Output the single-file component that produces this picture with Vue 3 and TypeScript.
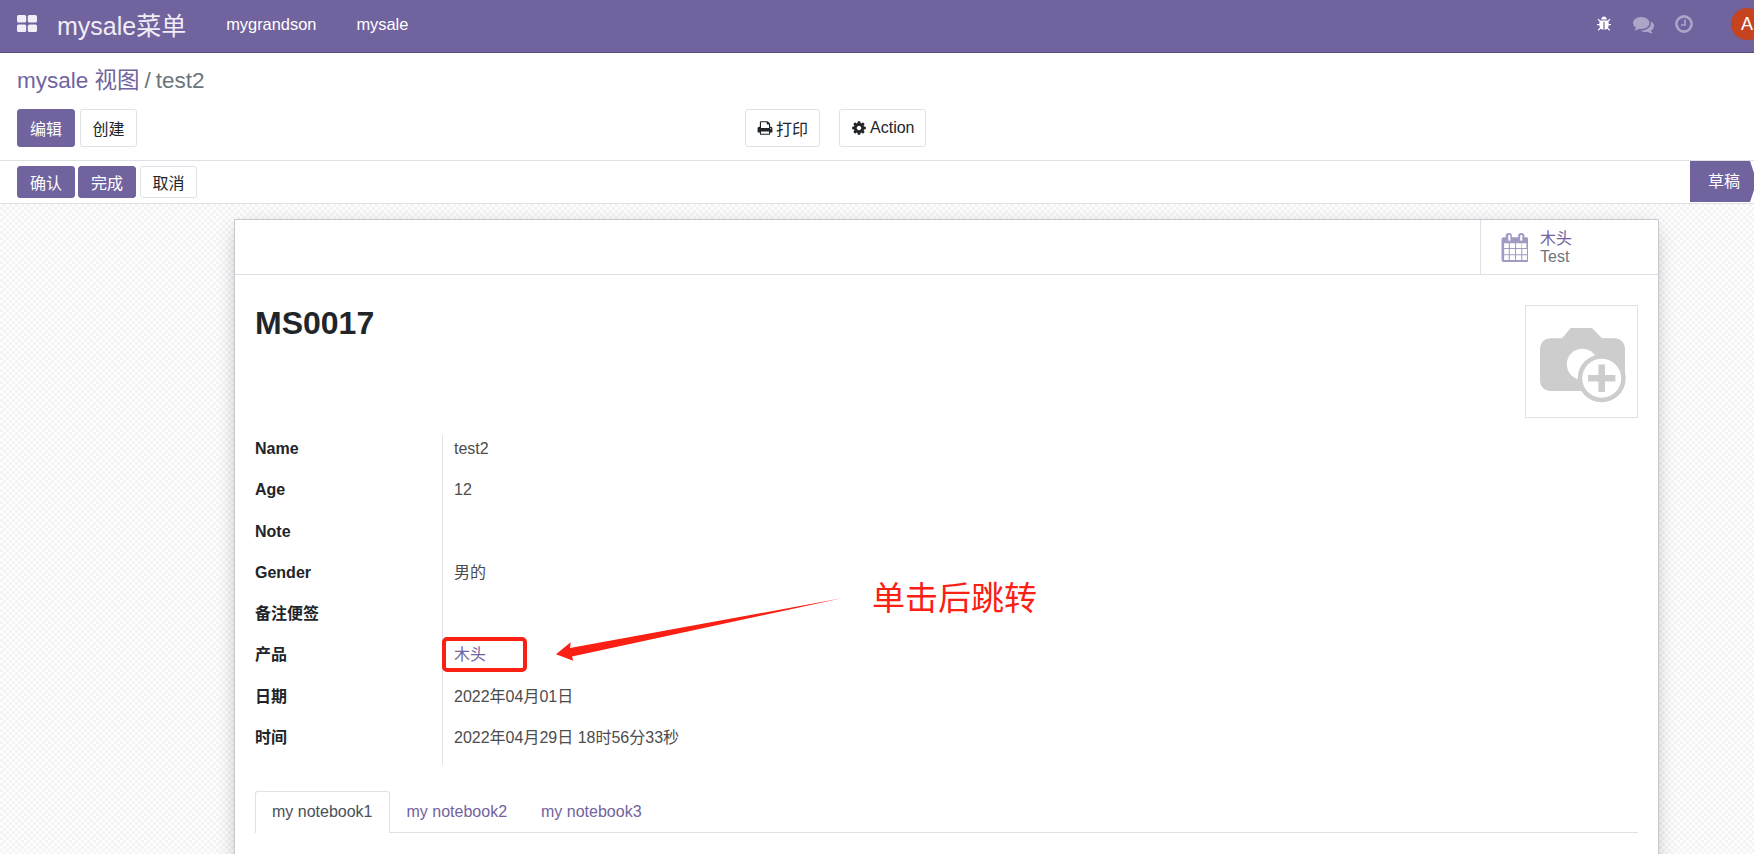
<template>
  <div class="page">
    <header class="navbar">
      <svg class="apps-icon" viewBox="0 0 20 17" aria-hidden="true">
        <rect x="0" y="0" width="9.2" height="7.6" rx="1.6" />
        <rect x="10.8" y="0" width="9.2" height="7.6" rx="1.6" />
        <rect x="0" y="9.4" width="9.2" height="7.6" rx="1.6" />
        <rect x="10.8" y="9.4" width="9.2" height="7.6" rx="1.6" />
      </svg>
      <span class="brand">mysale菜单</span>
      <a v-for="item in navItems" :key="item" class="nav-link">{{ item }}</a>
      <div class="systray">
        <svg class="tray-icon bug" viewBox="0 0 1792 1792" aria-hidden="true"><path :d="icons.bug" /></svg>
        <svg class="tray-icon muted" viewBox="0 0 1792 1792" aria-hidden="true"><path :d="icons.comments" /></svg>
        <svg class="tray-icon muted clock" viewBox="0 0 18 18" aria-hidden="true">
          <circle cx="9" cy="9" r="7.6" fill="none" stroke="currentColor" stroke-width="2.6" />
          <path d="M10 4.6V10H6" fill="none" stroke="currentColor" stroke-width="1.6" />
        </svg>
        <span class="avatar">A</span>
      </div>
    </header>

    <section class="control-panel">
      <div class="breadcrumb">
        <a class="crumb-link">mysale 视图</a><span class="crumb-sep">/</span><span>test2</span>
      </div>
      <div class="cp-buttons">
        <div class="cp-left">
          <button class="btn primary">编辑</button>
          <button class="btn">创建</button>
        </div>
        <div class="cp-sidebar">
          <button class="btn with-icon">
            <svg class="btn-icon" viewBox="0 0 1792 1792" aria-hidden="true"><path :d="icons.print" /></svg>打印
          </button>
          <button class="btn with-icon">
            <svg class="btn-icon" viewBox="0 0 1792 1792" aria-hidden="true"><path :d="icons.cog" /></svg>Action
          </button>
        </div>
      </div>
    </section>

    <section class="statusbar">
      <div class="status-actions">
        <button class="btn small primary">确认</button>
        <button class="btn small primary">完成</button>
        <button class="btn small gap">取消</button>
      </div>
      <div class="status-pill">草稿</div>
    </section>

    <main class="form-bg">
      <div class="sheet">
        <div class="button-box">
          <div class="stat-button">
            <svg class="stat-icon" viewBox="0 0 1664 1792" aria-hidden="true"><path :d="icons.calendar" /></svg>
            <div class="stat-text">
              <span class="stat-value">木头</span>
              <span class="stat-label">Test</span>
            </div>
          </div>
        </div>

        <div class="sheet-body">
          <div class="sheet-head">
            <h1 class="record-title">MS0017</h1>
            <div class="image-box">
              <svg viewBox="0 0 111 111" class="camera" aria-hidden="true">
                <path class="cam-body" d="M24 32.300H36L44.700 22H66L76 32.300H89A10 10 0 0 1 99 42.300V75A10 10 0 0 1 89 85H24A10 10 0 0 1 14 75V42.300A10 10 0 0 1 24 32.300Z" />
                <circle class="cam-lens" cx="56.300" cy="58.300" r="15.500" />
                <circle class="cam-ring" cx="75.700" cy="72.300" r="24" />
                <circle class="cam-plus-bg" cx="75.700" cy="72.300" r="19.500" />
                <path class="cam-plus" d="M62 72.300H89.400M75.700 58.600V86" />
              </svg>
            </div>
          </div>

          <div class="fields">
            <template v-for="row in rows" :key="row.label">
              <div class="field-label">{{ row.label }}</div>
              <div class="field-value" :class="{ link: row.link }">{{ row.value }}</div>
            </template>
          </div>

          <div class="tabs">
            <a v-for="(tab, i) in tabs" :key="tab" class="tab" :class="{ active: i === 0 }">{{ tab }}</a>
          </div>
        </div>
      </div>
    </main>

    <!-- red markup drawn on top of the screenshot -->
    <div class="mark-box"></div>
    <svg class="mark-arrow" width="300" height="80" viewBox="0 0 300 80" aria-hidden="true">
      <polygon points="291.7,8.3 20,58 20.7,52.3 6,64.3 23.3,70.7 22,66.5" fill="#fa2014" />
    </svg>
    <div class="mark-text">单击后跳转</div>
  </div>
</template>

<script setup lang="ts">
interface FormRow {
  label: string;
  value: string;
  link?: boolean;
}

const navItems: string[] = ['mygrandson', 'mysale'];
const tabs: string[] = ['my notebook1', 'my notebook2', 'my notebook3'];

const rows: FormRow[] = [
  { label: 'Name', value: 'test2' },
  { label: 'Age', value: '12' },
  { label: 'Note', value: '' },
  { label: 'Gender', value: '男的' },
  { label: '备注便签', value: '' },
  { label: '产品', value: '木头', link: true },
  { label: '日期', value: '2022年04月01日' },
  { label: '时间', value: '2022年04月29日 18时56分33秒' },
];

const icons = {
  bug: 'M1696 960q0 26-19 45t-45 19h-224q0 171-67 290l208 209q19 19 19 45t-19 45q-18 19-45 19t-45-19l-198-197q-5 5-15 13t-42 28.500-65 36.500-82 29-97 13v-896h-128v896q-51 0-101.500-13.500t-87-33-66-39-43.500-32.500l-15-14-183 207q-20 21-48 21-24 0-43-16-19-18-20.500-44.500t15.500-46.500l202-227q-58-114-58-274h-224q-26 0-45-19t-19-45 19-45 45-19h224v-294l-173-173q-19-19-19-45t19-45 45-19 45 19l173 173h844l173-173q19-19 45-19t45 19 19 45-19 45l-173 173v294h224q26 0 45 19t19 45zm-480-576h-640q0-133 93.500-226.500t226.500-93.500 226.500 93.500 93.500 226.500z',
  comments: 'M1408 768q0 139-94 257t-256.500 186.500-353.500 68.500q-86 0-176-16-124 88-278 128-36 9-86 16h-3q-11 0-20.500-8t-11.500-21q-1-3-1-6.500t.5-6.500 2-6l2.500-5 3.500-5.500 4-5 4.500-5 4-4.500q5-6 23-25t26-29.500 22.500-29 25-38.500 20.500-44q-124-72-195-177t-71-224q0-139 94-257t256.500-186.500 353.500-68.500 353.500 68.500 256.500 186.500 94 257zm384 256q0 120-71 224.500t-195 176.500q10 24 20.500 44t25 38.500 22.500 29 26 29.500 23 25q1 1 4 4.500t4.500 5 4 5 3.500 5.500l2.500 5t2 6 .5 6.500-1 6.500q-3 14-13 22t-22 7q-50-7-86-16-154-40-278-128-90 16-176 16-271 0-472-132 58 4 88 4 161 0 309-45t264-129q125-92 192-212t67-254q0-77-23-152 129 71 204 178t75 230z',
  print: 'M448 1536h896v-256h-896v256zm0-640h896v-384h-160q-40 0-68-28t-28-68v-160h-640v640zm1152 64q0-26-19-45t-45-19-45 19-19 45 19 45 45 19 45-19 19-45zm128 0v416q0 13-9.500 22.500t-22.500 9.500h-224v160q0 40-28 68t-68 28h-960q-40 0-68-28t-28-68v-160h-224q-13 0-22.500-9.500t-9.500-22.500v-416q0-79 56.500-135.500t135.500-56.500h64v-544q0-40 28-68t68-28h672q40 0 88 20t76 48l152 152q28 28 48 76t20 88v256h64q79 0 135.500 56.500t56.500 135.500z',
  cog: 'M1152 896q0-106-75-181t-181-75-181 75-75 181 75 181 181 75 181-75 75-181zm512-109v222q0 12-8 23t-20 13l-185 28q-19 54-39 91 35 50 107 138 10 12 10 25t-9 23q-27 37-99 108t-94 71q-12 0-26-9l-138-108q-44 23-91 38-16 136-29 186-7 28-36 28h-222q-14 0-24.500-8.500t-11.500-21.500l-28-184q-49-16-90-37l-141 107q-10 9-25 9-14 0-25-11-126-114-165-168-7-10-7-23 0-12 8-23 15-21 51-66.500t54-70.500q-27-50-41-99l-183-27q-13-2-21-12.500t-8-23.500v-222q0-12 8-23t19-13l186-28q14-46 39-92-40-57-107-138-10-12-10-24 0-10 9-23 26-36 98.500-107.500t94.500-71.500q13 0 26 10l138 107q44-23 91-38 16-136 29-186 7-28 36-28h222q14 0 24.500 8.500t11.500 21.500l28 184q49 16 90 37l142-107q9-9 24-9 13 0 25 10 129 119 165 170 7 8 7 22 0 12-8 23-15 21-51 66.500t-54 70.500q26 50 41 98l183 28q13 2 21 12.500t8 23.500z',
  calendar: 'M192 1664h288v-288h-288v288zm352 0h320v-288h-320v288zm-352-352h288v-320h-288v320zm352 0h320v-320h-320v320zm-352-384h288v-288h-288v288zm736 736h320v-288h-320v288zm-384-736h320v-288h-320v288zm768 736h288v-288h-288v288zm-384-352h320v-320h-320v320zm-352-864v-288q0-13-9.500-22.500t-22.500-9.500h-64q-13 0-22.500 9.500t-9.500 22.500v288q0 13 9.500 22.500t22.500 9.500h64q13 0 22.500-9.500t9.500-22.500zm736 864h288v-320h-288v320zm-384-384h320v-288h-320v288zm352 0h288v-288h-288v288zm32-480v-288q0-13-9.500-22.500t-22.500-9.500h-64q-13 0-22.500 9.500t-9.500 22.500v288q0 13 9.500 22.500t22.500 9.500h64q13 0 22.500-9.500t9.500-22.500zm384-64v1280q0 52-38 90t-90 38h-1408q-52 0-90-38t-38-90v-1280q0-52 38-90t90-38h128v-96q0-66 47-113t113-47h64q66 0 113 47t47 113v96h384v-96q0-66 47-113t113-47h64q66 0 113 47t47 113v96h128q52 0 90 38t38 90z',
};
</script>

<style>
html,
body {
  margin: 0;
  overflow: hidden;
}
</style>

<style scoped>
.page {
  position: relative;
  width: 1754px;
  height: 854px;
  overflow: hidden;
  display: flex;
  flex-direction: column;
  background: #fff;
  color: #4c4c4c;
  font-family: "Liberation Sans", "Noto Sans CJK SC", sans-serif;
  font-size: 16px;
}

.navbar {
  flex: none;
  box-sizing: border-box;
  height: 53px;
  display: flex;
  align-items: center;
  padding: 0 0 4px 17px;
  background: #71639e;
  border-bottom: 1px solid #5b4f7f;
  color: #fff;
}

.apps-icon {
  width: 20px;
  height: 17px;
  margin-right: 20px;
  margin-top: -2px;
  fill: #f1eef7;
}

.brand {
  font-size: 25px;
  margin-right: 40px;
  color: #f0edf6;
}

.nav-link {
  font-size: 16.4px;
  margin-right: 40px;
}

.systray {
  margin-left: auto;
  display: flex;
  align-items: center;
}

.tray-icon {
  width: 21px;
  height: 21px;
  fill: currentColor;
}

.tray-icon.bug {
  width: 16px;
  height: 16px;
  margin-right: 21px;
  color: #fff;
}

.tray-icon.muted {
  color: #aea5c8;
  margin-right: 21px;
}

.tray-icon.clock {
  width: 18px;
  height: 18px;
  margin-right: 0;
}

.avatar {
  width: 32px;
  height: 32px;
  margin-left: 38px;
  margin-right: -9px;
  flex: none;
  border-radius: 50%;
  background: #c5431f;
  color: #fff;
  font-size: 18px;
  line-height: 32px;
  text-align: center;
}

.control-panel {
  flex: none;
  height: 108px;
  box-sizing: border-box;
  padding: 14px 17px 0;
  border-bottom: 1px solid #dee2e6;
}

.breadcrumb {
  height: 28px;
  line-height: 28px;
  font-size: 22.5px;
  color: #6c757d;
}

.crumb-link {
  color: #71639e;
}

.crumb-sep {
  margin: 0 5px;
}

.cp-buttons {
  display: flex;
  margin-top: 14px;
}

.cp-left {
  width: 728px;
  display: flex;
  gap: 5px;
}

.cp-sidebar {
  display: flex;
  gap: 19px;
}

.btn {
  box-sizing: border-box;
  height: 38px;
  padding: 0 11.5px;
  display: inline-flex;
  align-items: center;
  border: 1px solid #dee2e6;
  border-radius: 3px;
  background: #fff;
  color: #212529;
  font: inherit;
}

.btn.primary {
  padding: 0 12px;
  background: #71639e;
  border-color: #71639e;
  color: #fff;
}

.btn.with-icon {
  padding: 0 11px;
}

.btn.small {
  height: 32px;
}

.btn.gap {
  margin-left: 1px;
}

.btn-icon {
  width: 16px;
  height: 16px;
  margin-right: 3px;
  fill: #212529;
}

.statusbar {
  flex: none;
  height: 43px;
  box-sizing: border-box;
  display: flex;
  justify-content: space-between;
  padding-left: 17px;
  border-bottom: 1px solid #dee2e6;
}

.status-actions {
  display: flex;
  gap: 3px;
  padding-top: 5px;
}

.status-pill {
  width: 64px;
  height: 41px;
  line-height: 41px;
  padding-left: 18px;
  box-sizing: border-box;
  background: #71639e;
  color: #fff;
  clip-path: polygon(0 0, 60px 0, 64px 12px, 64px 29px, 60px 41px, 0 41px);
}

.form-bg {
  flex: 1;
  min-height: 0;
  padding-top: 15px;
  background-color: #fdfdfd;
  background-image: conic-gradient(#f4f4f4 25%, transparent 0 50%, #f4f4f4 0 75%, transparent 0);
  background-size: 6px 6px;
}

.sheet {
  box-sizing: border-box;
  width: 1425px;
  height: 700px;
  margin-left: 234px;
  background: #fff;
  border: 1px solid #c8c8d3;
  box-shadow: 0 5px 20px -6px rgba(0, 0, 0, 0.35);
}

.button-box {
  height: 54px;
  display: flex;
  justify-content: flex-end;
  border-bottom: 1px solid #dee2e6;
}

.stat-button {
  width: 178px;
  box-sizing: border-box;
  display: flex;
  align-items: center;
  padding-left: 20px;
  border-left: 1px solid #dee2e6;
}

.stat-icon {
  width: 27px;
  height: 29px;
  fill: #a29ac2;
  margin-right: 12px;
}

.stat-text {
  display: flex;
  flex-direction: column;
  line-height: 18px;
  padding-top: 2px;
}

.stat-value {
  color: #71639e;
}

.stat-label {
  color: #6c757d;
}

.sheet-body {
  padding: 30px 20px 0 20px;
}

.sheet-head {
  display: flex;
  justify-content: space-between;
  align-items: flex-start;
  height: 113px;
}

.record-title {
  margin: 0;
  font-size: 32px;
  line-height: 36px;
  color: #212529;
}

.image-box {
  width: 113px;
  height: 113px;
  box-sizing: border-box;
  border: 1px solid #dee2e6;
}

.camera {
  display: block;
  width: 111px;
  height: 111px;
}

.cam-body,
.cam-ring {
  fill: #cdcdcd;
}

.cam-lens,
.cam-plus-bg {
  fill: #fff;
}

.cam-plus {
  fill: none;
  stroke: #cdcdcd;
  stroke-width: 6.5;
}

.fields {
  display: grid;
  grid-template-columns: 187px 1fr;
  grid-auto-rows: 41.25px;
  margin-top: 17px;
}

.field-label {
  font-weight: 700;
  color: #212529;
  line-height: 27px;
}

.field-value {
  border-left: 1px solid #dee2e6;
  padding-left: 11px;
  line-height: 27px;
}

.field-value.link {
  color: #71639e;
}

.tabs {
  display: flex;
  margin-top: 26px;
  height: 42px;
  box-sizing: border-box;
  border-bottom: 1px solid #dee2e6;
}

.tab {
  box-sizing: border-box;
  height: 42px;
  padding: 0 16px;
  line-height: 40px;
  color: #71639e;
  border: 1px solid transparent;
  border-bottom: 0;
  border-radius: 3px 3px 0 0;
}

.tab.active {
  color: #495057;
  background: #fff;
  border-color: #dee2e6;
}

.mark-box {
  position: absolute;
  left: 442px;
  top: 637px;
  width: 85px;
  height: 35px;
  box-sizing: border-box;
  border: 4px solid #fa2014;
  border-radius: 5px;
}

.mark-arrow {
  position: absolute;
  left: 550px;
  top: 590px;
}

.mark-text {
  position: absolute;
  left: 872px;
  top: 579px;
  font-size: 33px;
  line-height: 40px;
  color: #fa2014;
}
</style>
